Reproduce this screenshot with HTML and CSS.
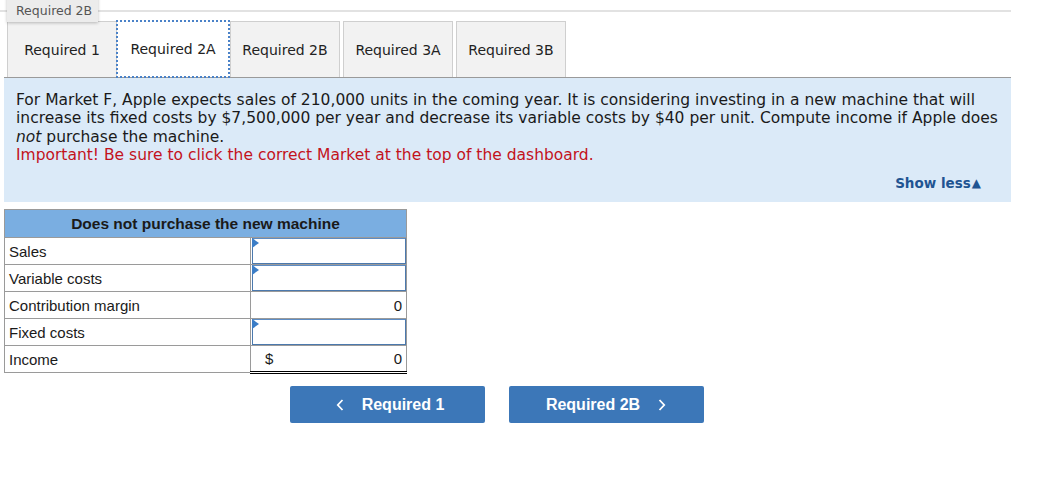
FILE: index.html
```html
<!DOCTYPE html>
<html lang="en">
<head>
<meta charset="utf-8">
<title>Required 2A</title>
<link rel="stylesheet" href="styles.css">
</head>
<body>
<div class="page">
  <div class="tooltip">Required 2B</div>
  <div class="topline"></div>
  <div class="tabs">
    <div class="tab">Required 1</div>
    <div class="tab active">Required 2A</div>
    <div class="tab">Required 2B</div>
    <div class="tab">Required 3A</div>
    <div class="tab">Required 3B</div>
  </div>
  <div class="panel">
    <p class="question">For Market F, Apple expects sales of 210,000 units in the coming year. It is considering investing in a new machine that will increase its fixed costs by $7,500,000 per year and decrease its variable costs by $40 per unit. Compute income if Apple does <em>not</em> purchase the machine.<br><span class="important">Important! Be sure to click the correct Market at the top of the dashboard.</span></p>
    <div class="showless"><span>Show less</span><span class="tri">&#9650;</span></div>
  </div>
  <table class="sheet">
    <tr><th colspan="2">Does not purchase the new machine</th></tr>
    <tr><td class="label">Sales</td><td class="value input"><div class="box"></div></td></tr>
    <tr><td class="label">Variable costs</td><td class="value input"><div class="box"></div></td></tr>
    <tr><td class="label">Contribution margin</td><td class="value"><div class="num">0</div></td></tr>
    <tr><td class="label">Fixed costs</td><td class="value input"><div class="box"></div></td></tr>
    <tr><td class="label">Income</td><td class="value total"><div class="num"><span class="dollar">$</span><span>0</span></div></td></tr>
  </table>
  <div class="nav">
    <button class="navbtn prev"><svg class="chev" width="8" height="12" viewBox="0 0 8 12"><path d="M6.5 1 L1.8 6 L6.5 11" fill="none" stroke="#fff" stroke-width="1.8"/></svg><span>Required 1</span></button>
    <button class="navbtn next"><span>Required 2B</span><svg class="chev" width="8" height="12" viewBox="0 0 8 12"><path d="M1.5 1 L6.2 6 L1.5 11" fill="none" stroke="#fff" stroke-width="1.8"/></svg></button>
  </div>
</div>
</body>
</html>
```

FILE: styles.css
```css
* { box-sizing: border-box; }
html, body { margin: 0; padding: 0; background: #ffffff; }
.page {
  position: relative;
  width: 1050px;
  height: 482px;
  overflow: hidden;
  font-family: "DejaVu Sans", Verdana, sans-serif;
  color: #1a1a1a;
}
.tooltip {
  position: absolute;
  left: 7px;
  top: -10px;
  width: 91px;
  height: 32px;
  padding: 14px 0 0 9px;
  background: #ececec;
  color: #555;
  font-size: 12.5px;
  line-height: 14px;
  white-space: nowrap;
  box-shadow: 0 1px 3px rgba(0,0,0,0.25);
  z-index: 2;
}
.topline {
  margin-top: 10px;
  width: 1011px;
  height: 2px;
  background: #e2e2e2;
}
.tabs {
  display: flex;
  margin: 9px 0 0 7px;
  height: 56px;
}
.tab {
  display: flex;
  align-items: center;
  justify-content: center;
  height: 56px;
  min-width: 110px;
  padding: 0 10px;
  margin-right: 3px;
  background: #f2f2f2;
  border: 1px solid #cfcfcf;
  border-bottom: none;
  font-size: 14px;
  color: #222;
}
.tab.active {
  background: #ffffff;
  border: none;
  outline: 2px dotted #4a82c8;
  outline-offset: -1px;
  margin-left: -3px;
  margin-right: 1px;
  min-width: 112px;
}
.panel {
  margin-left: 4px;
  width: 1007px;
  height: 125px;
  background: #dbeaf8;
  border-top: 1px solid #9a9a9a;
  padding: 13px 12px 0 12px;
}
.question {
  margin: 0;
  font-size: 15.5px;
  line-height: 18.4px;
  color: #1a1a1a;
}
.important { color: #c3131c; }
.showless {
  display: flex;
  justify-content: flex-end;
  align-items: center;
  gap: 1px;
  margin-top: 10px;
  padding-right: 18px;
  font-size: 13.5px;
  font-weight: bold;
  color: #1f5492;
  line-height: 16px;
}
.tri { font-size: 12px; }
.sheet {
  margin: 7px 0 0 4px;
  border-collapse: collapse;
  width: 403px;
  font-family: "Liberation Sans", Arial, sans-serif;
  font-size: 15px;
  color: #1a1a1a;
}
.sheet th {
  height: 28px;
  background: #7aaee1;
  border: 1px solid #9a9a9a;
  font-weight: bold;
  font-size: 15.5px;
  text-align: center;
  padding: 0;
}
.sheet td {
  height: 27px;
  border: 1px solid #9a9a9a;
  padding: 0;
}
.sheet td.label {
  width: 246px;
  padding-left: 4px;
}
.sheet td.value { position: relative; }
.box {
  position: relative;
  height: 26px;
  margin: 0 0 0 1px;
  border: 1.5px solid #4b79ad;
  border-top-color: #5d8cc4;
  background: #fff;
}
.box::before {
  content: "";
  position: absolute;
  left: -1px;
  top: -1px;
  border-top: 5px solid transparent;
  border-bottom: 5px solid transparent;
  border-left: 7px solid #3b7dc6;
}
.num {
  display: flex;
  justify-content: flex-end;
  padding: 0 4px 0 14px;
}
.total { border-bottom: 3px double #000 !important; }
.total .num { justify-content: space-between; }
.nav {
  display: flex;
  justify-content: center;
  gap: 24px;
  width: 994px;
  margin-top: 12px;
}
.navbtn {
  display: flex;
  align-items: center;
  justify-content: center;
  gap: 18px;
  width: 195px;
  height: 37px;
  border: none;
  border-radius: 2px;
  background: #3c77b8;
  color: #ffffff;
  font-family: "Liberation Sans", Arial, sans-serif;
  font-size: 16px;
  font-weight: bold;
  padding: 0;
}
.navbtn.prev { padding-left: 5px; }
.navbtn.next { padding-right: 1px; }
.chev { display: block; }
```
